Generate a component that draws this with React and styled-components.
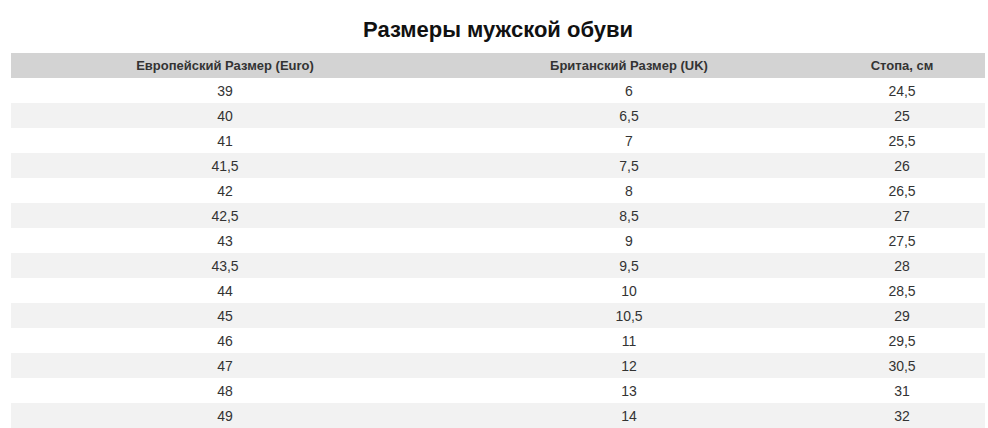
import React from "react";
import styled, { createGlobalStyle } from "styled-components";

const Global = createGlobalStyle`
  html, body { margin: 0; padding: 0; background: #fff; }
  body { font-family: "Liberation Sans", Arial, sans-serif; }
`;

const Page = styled.div`
  width: 988px;
  padding: 0 3px 0 11px;
  box-sizing: border-box;
`;

const Title = styled.h1`
  margin: 19px 0 12px;
  font-size: 22px;
  line-height: 22px;
  font-weight: 700;
  color: #111;
  text-align: center;
`;

const Table = styled.div`
  width: 974px;
  display: grid;
  grid-template-columns: 428px 380px 166px;
`;

const Row = styled.div`
  display: contents;
`;

const Cell = styled.div`
  height: 25px;
  display: flex;
  align-items: center;
  justify-content: center;
  font-size: ${(p) => (p.$head ? "13px" : "14px")};
  font-weight: ${(p) => (p.$head ? 700 : 400)};
  color: #333;
  background: ${(p) => (p.$head ? "#d3d3d3" : p.$odd ? "#f2f2f2" : "#ffffff")};
`;

const rows = [
  ["39", "6", "24,5"],
  ["40", "6,5", "25"],
  ["41", "7", "25,5"],
  ["41,5", "7,5", "26"],
  ["42", "8", "26,5"],
  ["42,5", "8,5", "27"],
  ["43", "9", "27,5"],
  ["43,5", "9,5", "28"],
  ["44", "10", "28,5"],
  ["45", "10,5", "29"],
  ["46", "11", "29,5"],
  ["47", "12", "30,5"],
  ["48", "13", "31"],
  ["49", "14", "32"],
];

const headers = ["Европейский Размер (Euro)", "Британский Размер (UK)", "Стопа, см"];

export default function App() {
  return (
    <Page>
      <Global />
      <Title>Размеры мужской обуви</Title>
      <Table>
        <Row>
          {headers.map((h) => (
            <Cell key={h} $head>
              {h}
            </Cell>
          ))}
        </Row>
        {rows.map((r, i) => (
          <Row key={i}>
            {r.map((v, j) => (
              <Cell key={j} $odd={i % 2 === 1}>
                {v}
              </Cell>
            ))}
          </Row>
        ))}
      </Table>
    </Page>
  );
}
